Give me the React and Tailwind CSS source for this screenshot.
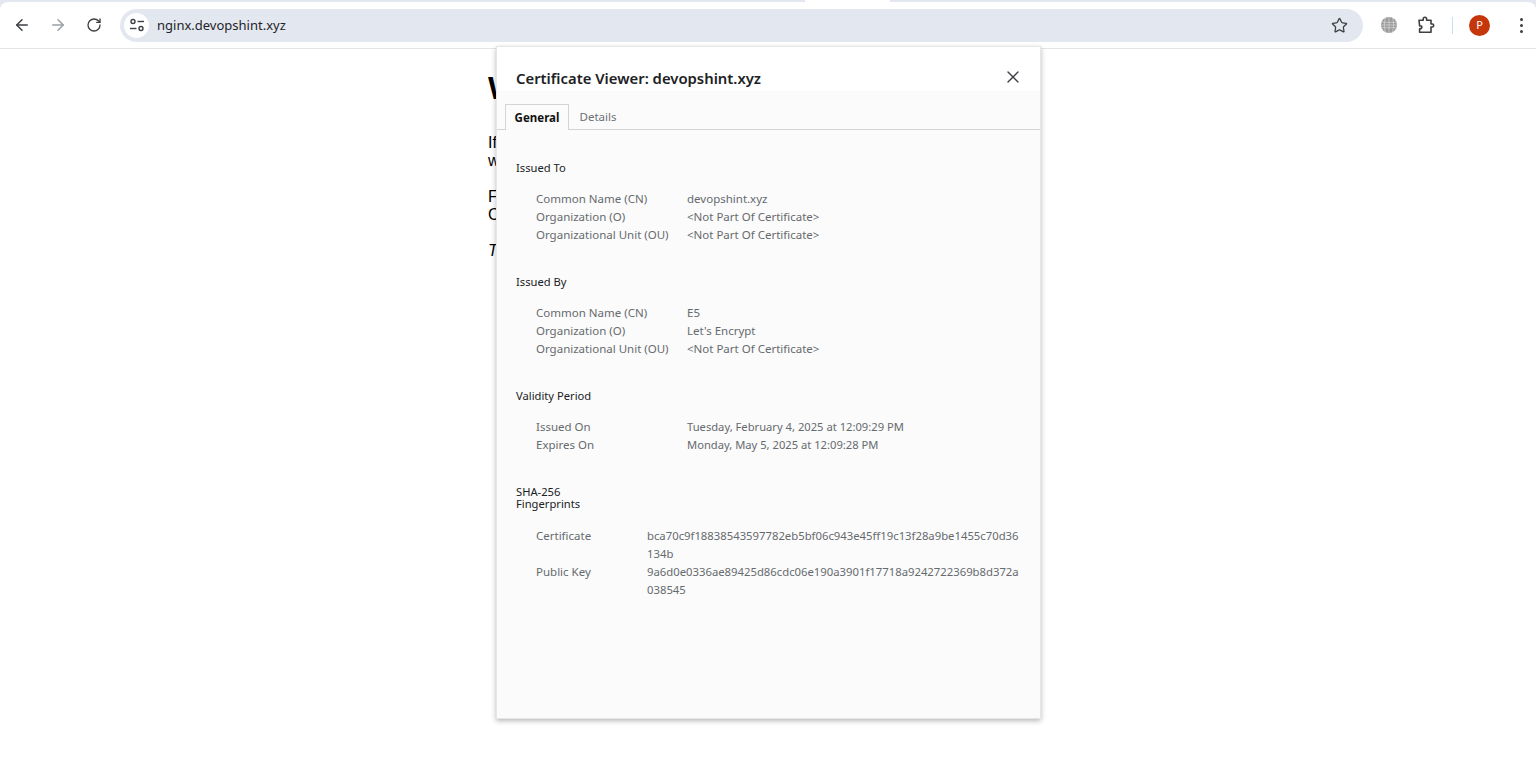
import React from 'react';
import { ArrowLeft, ArrowRight, RotateCw, Star, X } from 'lucide-react';

const sections = [
  {
    title: 'Issued To',
    rows: [
      ['Common Name (CN)', 'devopshint.xyz'],
      ['Organization (O)', '<Not Part Of Certificate>'],
      ['Organizational Unit (OU)', '<Not Part Of Certificate>'],
    ],
  },
  {
    title: 'Issued By',
    rows: [
      ['Common Name (CN)', 'E5'],
      ['Organization (O)', "Let's Encrypt"],
      ['Organizational Unit (OU)', '<Not Part Of Certificate>'],
    ],
  },
  {
    title: 'Validity Period',
    narrow: true,
    rows: [
      ['Issued On', 'Tuesday, February 4, 2025 at 12:09:29 PM'],
      ['Expires On', 'Monday, May 5, 2025 at 12:09:28 PM'],
    ],
  },
];

const fingerprints = [
  ['Certificate', ['bca70c9f18838543597782eb5bf06c943e45ff19c13f28a9be1455c70d36', '134b']],
  ['Public Key', ['9a6d0e0336ae89425d86cdc06e190a3901f17718a9242722369b8d372a', '038545']],
];

const TuneIcon = () => (
  <svg width="16" height="16" viewBox="0 0 16 16" fill="none" stroke="#3c4043" strokeWidth="1.4">
    <circle cx="4" cy="4.5" r="2" />
    <path d="M8.5 4.5H15" />
    <path d="M1 11.5H7.5" />
    <circle cx="12" cy="11.5" r="2" />
  </svg>
);

const GlobeIcon = () => (
  <svg width="16" height="16" viewBox="0 0 16 16" fill="none">
    <circle cx="8" cy="8" r="8" fill="#9a9a9a" />
    <path d="M0 5.3H16M0 8H16M0 10.7H16M8 0V16M4.5 1C3 5 3 11 4.5 15M11.5 1C13 5 13 11 11.5 15" stroke="#d2d2d2" strokeWidth="0.8" />
  </svg>
);

const ExtensionIcon = () => (
  <svg width="18" height="18" viewBox="0 0 18 18" fill="none" stroke="#3c4043" strokeWidth="1.6" strokeLinejoin="round">
    <path d="M2 4.2H6.2V3a1.7 1.7 0 0 1 3.4 0v1.2H14V8h1.2a1.5 1.5 0 0 1 0 3H14v5.2H2.6v-3.4c1.6 0 2.2-.9 2.2-1.9S4 10 2.6 10L2 4.2z" />
  </svg>
);

const Toolbar = () => (
  <div className="h-[49px] bg-[#e3e8f0] flex flex-col shrink-0">
    <div className="h-[2px] flex">
      <div className="w-[85px] bg-white ml-[805px]" />
    </div>
    <div className="flex-1 bg-white rounded-t-lg border-b border-[#e2e4e8] flex items-center">
      <div className="w-[120px] flex items-center text-[#3c4043] shrink-0">
        <ArrowLeft size={18} strokeWidth={2} className="ml-[13px]" />
        <ArrowRight size={18} strokeWidth={2} className="ml-[18px] text-[#9aa0a6]" />
        <RotateCw size={16} strokeWidth={2} className="ml-[19px]" />
      </div>
      <div className="w-[1243px] h-[33px] rounded-full bg-[#e3e8f0] flex items-center shrink-0">
        <div className="ml-[4px] w-[25px] h-[25px] rounded-full bg-white flex items-center justify-center">
          <TuneIcon />
        </div>
        <span className="ml-[8px] mt-[2px] text-[13px] text-[#1f2328] font-['Noto_Sans',sans-serif]">nginx.devopshint.xyz</span>
        <Star size={17} strokeWidth={1.8} className="ml-auto mr-[15px] text-[#3c4043]" />
      </div>
      <div className="flex items-center flex-1">
        <div className="ml-[18px]"><GlobeIcon /></div>
        <div className="ml-[20px]"><ExtensionIcon /></div>
        <div className="ml-[17px] w-px h-[17px] bg-[#c9dcf5]" />
        <div className="ml-[16px] w-[21px] h-[21px] rounded-full bg-[#c5360a] text-white text-[11px] flex items-center justify-center font-['Noto_Sans',sans-serif]">P</div>
        <div className="ml-[30px] flex flex-col gap-[3px]">
          <span className="w-[3px] h-[3px] rounded-full bg-[#3c4043]" />
          <span className="w-[3px] h-[3px] rounded-full bg-[#3c4043]" />
          <span className="w-[3px] h-[3px] rounded-full bg-[#3c4043]" />
        </div>
      </div>
    </div>
  </div>
);

// nginx welcome page, mostly hidden behind the dialog
const WelcomePage = () => (
  <div className="w-[552px] ml-[488px] pt-[21px] text-black text-[16px] leading-[18px] font-['Liberation_Sans',sans-serif]">
    <h1 className="text-[32px] leading-[37px] font-bold mb-[27px]">Welcome to nginx!</h1>
    <p className="mb-[18px]">If you see this page, the nginx web server is successfully installed and working. Further configuration is required.</p>
    <p className="mb-[18px]">For online documentation and support please refer to nginx.org.<br />Commercial support is available at nginx.com.</p>
    <p className="italic">Thank you for using nginx.</p>
  </div>
);

const Section = ({ title, rows, narrow }) => (
  <div className="mb-[29px]">
    <h3 className="h-[18px] leading-[18px] text-[11.2px] text-[#202124] mb-[13px]">{title}</h3>
    <div className="pl-[20px]">
      {rows.map(([label, value]) => (
        <div key={label} className="grid grid-cols-[151px_1fr] h-[18px] leading-[18px] text-[#666a6e]">
          <span>{label}</span>
          <span className={narrow ? 'text-[11.2px]' : ''}>{value}</span>
        </div>
      ))}
    </div>
  </div>
);

const CertificateDialog = () => (
  <div className="absolute left-[496px] top-[46px] w-[545px] h-[673px] bg-[#fbfbfb] border border-[#e6e6e6] shadow-[0_2px_5px_rgba(0,0,0,0.28)] flex flex-col text-[11.5px] font-['Noto_Sans',sans-serif]">
    <div className="h-[44px] bg-white flex items-start justify-between shrink-0 pl-[19px] pr-[17px]">
      <h2 className="mt-[20px] text-[14.85px] leading-[22px] font-semibold text-[#202124]">Certificate Viewer: devopshint.xyz</h2>
      <X size={20} strokeWidth={1.6} className="mt-[20px] text-[#3c4043]" />
    </div>
    <div className="h-[39px] border-b border-[#d4d4d4] flex items-end pl-[8px] shrink-0">
      <div className="w-[64px] h-[26px] mb-[-1px] bg-[#fbfbfb] border border-b-0 border-[#d4d4d4] flex items-center justify-center font-bold text-[#111]">General</div>
      <div className="w-[58px] h-[26px] mb-[-1px] flex items-center justify-center text-[#6b7075]">Details</div>
    </div>
    <div className="pl-[19px] pr-[20px] pt-[29px]">
      {sections.map((s) => <Section key={s.title} {...s} />)}
      <h3 className="leading-[12px] text-[11.2px] text-[#202124] mb-[17px] pt-[3px]">SHA-256<br />Fingerprints</h3>
      <div className="pl-[20px]">
        {fingerprints.map(([label, lines]) => (
          <div key={label} className="grid grid-cols-[111px_1fr] leading-[18px] text-[#666a6e]">
            <span>{label}</span>
            <div className="text-[11.3px]">
              {lines.map((line) => <div key={line}>{line}</div>)}
            </div>
          </div>
        ))}
      </div>
    </div>
  </div>
);

export default function App() {
  return (
    <div className="relative h-[778px] w-full overflow-hidden bg-white flex flex-col">
      <Toolbar />
      <WelcomePage />
      <CertificateDialog />
    </div>
  );
}
